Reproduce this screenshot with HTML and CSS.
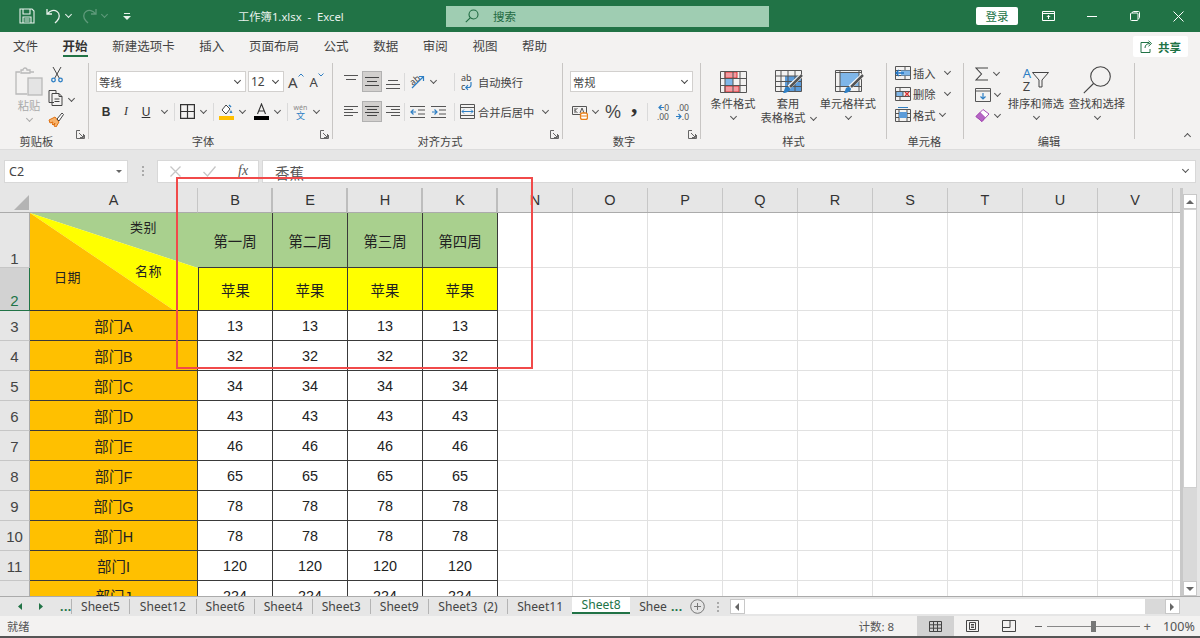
FILE: index.html
```html
<!DOCTYPE html>
<html lang="zh-CN">
<head>
  <meta charset="UTF-8" />
  <title>工作簿1.xlsx - Excel</title>
  <link rel="stylesheet" href="styles.css">
</head>
<body>

  <!-- title bar -->
  <header class="titlebar">
    <svg class="qa-save" width="16" height="16" viewBox="0 0 16 16" fill="none" stroke="#e8f1ec" stroke-width="1.1"><path d="M1 1h12l2 2v12H1zM4 1v5h7V1M4 15V9h8v6M5.5 11h5M5.5 13h5"/></svg>
    <svg class="qa-undo" width="15" height="16" viewBox="0 0 15 16" fill="none" stroke="#e8f1ec" stroke-width="1.3"><path d="M1 1v5h5M1.5 6C4 2.5 8 1.5 11 3.5c3 2 3 6.500 0 9.500l-2 2"/></svg>
    <i class="chev chev-light qa-chev1"></i>
    <svg class="qa-redo" width="15" height="16" viewBox="0 0 15 16" fill="none" stroke="#5f9a7b" stroke-width="1.3"><path d="M14 1v5H9M13.5 6C11 2.5 7 1.5 4 3.5c-3 2-3 6.500 0 9.500l2 2"/></svg>
    <i class="chev chev-dim qa-chev2"></i>
    <svg class="qa-custom" width="8" height="7" viewBox="0 0 8 7" fill="#e8f1ec"><path d="M1 0h6v1H1zM0 3h8L4 7z"/></svg>
    <div class="doc-title">工作簿1.xlsx&nbsp; - &nbsp;Excel</div>
    <div class="searchbox">
      <svg width="14" height="14" viewBox="0 0 14 14" fill="none" stroke="#1f6b42" stroke-width="1.1"><circle cx="8.5" cy="5.5" r="4.5"/><path d="M5.2 8.800L.8 13.200"/></svg>
      <span>搜索</span>
    </div>
    <button class="signin">登录</button>
    <svg class="win-display" width="13" height="10" viewBox="0 0 13 10" fill="none" stroke="#fff"><path d="M.5.5h12v9H.5zM.5 2.5h12M6.5 8V4.500M4.800 6l1.700-1.700L8.200 6"/></svg>
    <svg class="win-min" width="10" height="1" viewBox="0 0 10 1"><path d="M0 0h10v1H0z" fill="#fff"/></svg>
    <svg class="win-max" width="10" height="10" viewBox="0 0 10 10" fill="none" stroke="#fff"><rect x=".5" y="2" width="7.5" height="7.5" rx="1"/><path d="M2.5 2V1.500a1 1 0 0 1 1-1h5a1 1 0 0 1 1 1v5a1 1 0 0 1-1 1"/></svg>
    <svg class="win-close" width="11" height="11" viewBox="0 0 11 11" stroke="#fff"><path d="M.5.5l10 10M10.5.5l-10 10"/></svg>
  </header>

  <!-- tabs -->
  <nav class="tabs">
    <a class="tab">文件</a>
    <a class="tab tab-active">开始</a>
    <a class="tab">新建选项卡</a>
    <a class="tab">插入</a>
    <a class="tab">页面布局</a>
    <a class="tab">公式</a>
    <a class="tab">数据</a>
    <a class="tab">审阅</a>
    <a class="tab">视图</a>
    <a class="tab">帮助</a>
    <button class="share">
      <svg width="14" height="13" viewBox="0 0 14 13" fill="none" stroke="#217346"><path d="M9 2.5H1v10h9V9M5 8c0-3 2-4.500 5-4.500M8.5.8L11.5 3.500 8.5 6.200"/></svg>
      共享
    </button>
  </nav>

  <!-- ribbon -->
  <section class="ribbon">

    <div class="group g-clip">
      <div class="group-body">
        <div class="paste">
          <svg width="28" height="30" viewBox="0 0 28 30" fill="none" stroke="#b9b9b9" stroke-width="1.3"><path d="M5 5H1v22h11M19 5h-4M6 6V3h2a2 2 0 0 1 4 0h3v3z"/><rect x="13" y="11" width="14" height="17" fill="#e4e4e4"/></svg>
          <span class="paste-label">粘贴</span>
          <i class="chev chev-dim2"></i>
        </div>
        <div class="clip-tools">
          <svg class="clip-cut" width="12" height="16" viewBox="0 0 12 16" fill="none" stroke="#444" stroke-width="1"><path d="M2 0l6.5 11.500M10 0L3.5 11.500"/><g stroke="#2e7fc4" stroke-width="1.3"><circle cx="2.5" cy="13" r="1.8"/><circle cx="9.5" cy="13" r="1.8"/></g></svg>
          <div class="clip-copy">
            <svg width="16" height="16" viewBox="0 0 16 16" fill="none" stroke="#444"><path d="M6 12.5H1V.5h7v3M4 3.5h7l3 3v9H4zM11 3.5v3h3M6.5 9h5M6.5 11.500h5"/></svg>
            <i class="chev"></i>
          </div>
          <svg class="clip-brush" width="16" height="15" viewBox="0 0 16 15" fill="none"><path d="M1 8l6-3 4 5-3 5-2-1 1-3-2 2-1-1 1-2-3 1z" fill="#f7b26b" stroke="#e07010"/><path d="M9 7l5-6 1.5 1.500L11 9z" fill="#fff" stroke="#444"/></svg>
        </div>
      </div>
      <div class="group-label">剪贴板</div>
      <svg class="launcher" width="9" height="9" viewBox="0 0 9 9" fill="none" stroke="#666"><path d="M4 .5H.5V8.500h8V5M3 3l4 4M7.5 4v3.500H4"/></svg>
    </div>

    <div class="group g-font">
      <div class="group-body col">
        <div class="tool-row">
          <div class="combo combo-font">等线<i class="chev combo-chev"></i></div>
          <div class="combo combo-size">12<i class="chev combo-chev"></i></div>
          <span class="grow-a">A<svg width="6" height="4" viewBox="0 0 6 4" fill="none" stroke="#2e7fc4"><path d="M.5 3.500L3 1l2.500 2.500"/></svg></span>
          <span class="shrink-a">A<svg width="6" height="4" viewBox="0 0 6 4" fill="none" stroke="#2e7fc4"><path d="M.5.5L3 3 5.5.5"/></svg></span>
        </div>
        <div class="tool-row row2">
          <span class="tool t-b">B</span>
          <span class="tool t-i">I</span>
          <span class="tool t-u">U</span>
          <i class="chev chev-slot"></i>
          <i class="sep"></i>
          <svg width="15" height="15" viewBox="0 0 15 15" fill="none" stroke="#333" stroke-width="1.2"><path d="M.6.6h13.800v13.800H.6zM7.5.6v13.800M.6 7.500h13.800"/></svg>
          <i class="chev chev-slot"></i>
          <i class="sep"></i>
          <svg width="15" height="17" viewBox="0 0 15 17" fill="none"><path d="M3 7l4-5 4 4-4 5z" stroke="#444" fill="#fff"/><path d="M10 2l2 2" stroke="#2e7fc4" stroke-width="1.5"/><path d="M12 7l1.5 3h-3z" fill="#2e7fc4"/><path d="M0 13h15v4H0z" fill="#ffc000"/></svg>
          <i class="chev chev-slot"></i>
          <span class="fc-gap"></span>
          <svg width="15" height="17" viewBox="0 0 15 17" fill="none"><path d="M3.5 11l4-10 4 10M5 8h5" stroke="#333" stroke-width="1.1"/><path d="M0 13h15v4H0z" fill="#000"/></svg>
          <i class="chev chev-slot"></i>
          <i class="sep"></i>
          <span class="wen"><b>wén</b><em>文</em></span>
          <i class="chev chev-slot"></i>
        </div>
      </div>
      <div class="group-label">字体</div>
      <svg class="launcher" width="9" height="9" viewBox="0 0 9 9" fill="none" stroke="#666"><path d="M4 .5H.5V8.500h8V5M3 3l4 4M7.5 4v3.500H4"/></svg>
    </div>

    <div class="group g-align">
      <div class="group-body col">
        <div class="tool-row">
          <span class="al al-high"><svg width="14" height="6" viewBox="0 0 14 6" stroke="#555"><path d="M0 .5h14M2 4.500h10"/></svg></span>
          <span class="al al-on"><svg width="14" height="10" viewBox="0 0 14 10" stroke="#444"><path d="M0 .5h14M2 4.500h10M0 8.500h14"/></svg></span>
          <span class="al al-low"><svg width="14" height="9" viewBox="0 0 14 9" stroke="#555"><path d="M2 .5h10M0 4.500h14M0 8.500h14"/></svg></span>
          <i class="sep sep-a"></i>
          <svg class="orient" width="15" height="15" viewBox="0 0 15 15" fill="none"><text x="1" y="9" transform="rotate(-40 6 8)" class="orient-text">ab</text><path d="M2 14L13 3M9 2.500h4.500V7" stroke="#2e7fc4" stroke-width="1.2"/></svg>
          <i class="chev chev-slot"></i>
          <i class="sep sep-b"></i>
          <span class="wrap-ic"><span>ab</span><span>c</span><svg width="7" height="10" viewBox="0 0 7 10" fill="none" stroke="#2e7fc4" stroke-width="1.2"><path d="M6 0v3a2.500 2.500 0 0 1-2.500 2.500H1M3 3.200L.8 5.500 3 7.800"/></svg></span>
          <span class="al-text">自动换行</span>
        </div>
        <div class="tool-row row2">
          <span class="al"><svg width="14" height="11" viewBox="0 0 14 11" stroke="#555"><path d="M0 .5h14M0 3.500h9M0 6.500h14M0 9.500h9"/></svg></span>
          <span class="al al-on"><svg width="14" height="11" viewBox="0 0 14 11" stroke="#444"><path d="M0 .5h14M2 3.500h10M0 6.500h14M2 9.500h10"/></svg></span>
          <span class="al"><svg width="14" height="11" viewBox="0 0 14 11" stroke="#555"><path d="M0 .5h14M5 3.500h9M0 6.500h14M5 9.500h9"/></svg></span>
          <i class="sep sep-a"></i>
          <svg class="indent1" width="15" height="12" viewBox="0 0 15 12" fill="none"><path d="M0 .5h15M8 4h7M8 8h7M0 11.500h15" stroke="#555"/><path d="M6 6H1M3.5 3.500L1 6l2.500 2.500" stroke="#2e7fc4" stroke-width="1.2"/></svg>
          <svg class="indent2" width="15" height="12" viewBox="0 0 15 12" fill="none"><path d="M0 .5h15M8 4h7M8 8h7M0 11.500h15" stroke="#555"/><path d="M1 6h5M3.5 3.500L6 6 3.5 8.500" stroke="#2e7fc4" stroke-width="1.2"/></svg>
          <i class="sep sep-c"></i>
          <svg class="merge-ic" width="15" height="15" viewBox="0 0 15 15" fill="none"><path d="M.5.5h14v14H.5zM.5 3.500h14M.5 11.500h14" stroke="#555"/><path d="M2 7.500h11M4 5.500L2 7.500l2 2M11 5.500l2 2-2 2" stroke="#2e7fc4"/></svg>
          <span class="al-text">合并后居中</span>
          <i class="chev merge-chev"></i>
        </div>
      </div>
      <div class="group-label">对齐方式</div>
      <svg class="launcher" width="9" height="9" viewBox="0 0 9 9" fill="none" stroke="#666"><path d="M4 .5H.5V8.500h8V5M3 3l4 4M7.5 4v3.500H4"/></svg>
    </div>

    <div class="group g-num">
      <div class="group-body col">
        <div class="tool-row">
          <div class="combo combo-num">常规<i class="chev combo-chev"></i></div>
        </div>
        <div class="tool-row row2">
          <svg class="acct-ic" width="16" height="16" viewBox="0 0 16 16" fill="none"><path d="M.5 2.500h14v8H.5z" stroke="#555"/><path d="M3 4v5M3 6.500L5.5 4M3 6.500L5.5 9M8 9l2-5 2 5" stroke="#555"/><rect x="8.5" y="9" width="7" height="6.5" rx="2" fill="#fff" stroke="#e8811a" stroke-width="1.3"/><path d="M9 12h6" stroke="#e8811a"/></svg>
          <i class="chev chev-slot"></i>
          <span class="pct">%</span>
          <span class="comma">,</span>
          <i class="sep sep-d"></i>
          <span class="dec dec-in"><svg width="6" height="7" viewBox="0 0 6 7" fill="none" stroke="#2e7fc4" stroke-width="1.2"><path d="M6 3.500H1M3.5 1L1 3.500 3.5 6"/></svg>0<br>.00</span>
          <span class="dec dec-out">.00<br><svg width="6" height="7" viewBox="0 0 6 7" fill="none" stroke="#2e7fc4" stroke-width="1.2"><path d="M0 3.500h5M2.500 1L5 3.500 2.500 6"/></svg>.0</span>
        </div>
      </div>
      <div class="group-label">数字</div>
      <svg class="launcher" width="9" height="9" viewBox="0 0 9 9" fill="none" stroke="#666"><path d="M4 .5H.5V8.500h8V5M3 3l4 4M7.5 4v3.500H4"/></svg>
    </div>

    <div class="group g-style">
      <div class="group-body row">
        <div class="big big-cond">
          <svg width="27" height="22" viewBox="0 0 27 22" fill="none"><path d="M5 1h12v6H5zM5 15h14v6H5z" fill="#f59aa0" stroke="#d33"/><path d="M5 8h8v6H5z" fill="#7fb6e8"/><path d="M.5.5h26v21H.5zM.5 7.500h26M.5 14.500h26M5 .5v21M13 .5v21M20 .5v21" stroke="#555"/></svg>
          <span>条件格式</span>
          <i class="chev"></i>
        </div>
        <div class="big big-table">
          <svg width="29" height="24" viewBox="0 0 29 24" fill="none"><path d="M10 6h17v15H10z" fill="#5b9bd9"/><path d="M.5.5h26v21H.5zM.5 6h26M.5 11.500h26M.5 16.500h26M6 .5v21M13 .5v21M20 .5v21" stroke="#555"/><path d="M27 5L14 17" stroke="#fff" stroke-width="4"/><path d="M27 5L15 17" stroke="#555" stroke-width="2.5"/><path d="M10 18c2-2 5-1 5 1s-3 4-7 4c1-1 1-3 2-5z" fill="#2e7fc4"/></svg>
          <span>套用</span>
          <span>表格格式<i class="chev inline-chev"></i></span>
        </div>
        <div class="big big-cell">
          <svg width="29" height="24" viewBox="0 0 29 24" fill="none"><path d="M5 2h19v14H5z" fill="#7fb6e8"/><path d="M.5.5h26v21H.5zM.5 2.500h26M.5 16.500h26M5 .5v21M24 .5v21" stroke="#555"/><path d="M28 5L15 17" stroke="#fff" stroke-width="4"/><path d="M28 5L16 17" stroke="#555" stroke-width="2.5"/><path d="M11 18c2-2 5-1 5 1s-3 4-7 4c1-1 1-3 2-5z" fill="#2e7fc4"/></svg>
          <span>单元格样式</span>
          <i class="chev"></i>
        </div>
      </div>
      <div class="group-label">样式</div>
    </div>

    <div class="group g-cells">
      <div class="group-body col">
        <div class="cell-row">
          <svg width="16" height="14" viewBox="0 0 16 14" fill="none"><path d="M.5.5h15v13H.5zM.5 4.500h15M.5 9.500h15M10 .5v13" stroke="#555"/><path d="M6 4.500h9v5H6z" fill="#7fb6e8"/><path d="M9 7H1M4 4L1 7l3 3" stroke="#1f74c4" stroke-width="1.3"/></svg>
          <span>插入</span><i class="chev cells-chev"></i>
        </div>
        <div class="cell-row">
          <svg width="16" height="14" viewBox="0 0 16 14" fill="none"><path d="M.5.5h15v13H.5zM.5 4.500h15M.5 9.500h15M5 .5v13" stroke="#555"/><path d="M1 4.500h7v5H1z" fill="#7fb6e8" stroke="#555"/><path d="M10 5l4 4M14 5l-4 4" stroke="#d33" stroke-width="1.3"/></svg>
          <span>删除</span><i class="chev cells-chev"></i>
        </div>
        <div class="cell-row">
          <svg width="16" height="15" viewBox="0 0 16 15" fill="none"><path d="M.5 2.500h15v12H.5zM.5 6.500h15M.5 10.500h15M4 2.500v12M12 2.500v12" stroke="#555"/><path d="M4 5h8v6H4z" fill="#5b9bd9"/><path d="M3 .5h10" stroke="#2e7fc4"/></svg>
          <span>格式</span><i class="chev cells-chev-s"></i>
        </div>
      </div>
      <div class="group-label">单元格</div>
    </div>

    <div class="group g-edit">
      <div class="group-body row">
        <div class="edit-tools">
          <div class="edit-row"><svg width="13" height="14" viewBox="0 0 13 14" fill="none" stroke="#444" stroke-width="1.1"><path d="M13 1H1l5.5 6L1 13h12"/></svg><i class="chev edit-chev"></i></div>
          <div class="edit-row"><svg width="16" height="14" viewBox="0 0 16 14" fill="none"><path d="M.5.5h15v13H.5zM.5 3h15" stroke="#555"/><path d="M8 5v6M5.5 8.500L8 11l2.500-2.500" stroke="#2e7fc4" stroke-width="1.2"/></svg><i class="chev edit-chev2"></i></div>
          <div class="edit-row"><svg width="15" height="15" viewBox="0 0 15 15" fill="none"><path d="M1 8.500L8 1.500l6 4.500-7 7.500z" fill="#fff" stroke="#a64bb5"/><path d="M1 8.500l4-4 5 5-3 4z" fill="#b565c4" stroke="#a64bb5"/></svg><i class="chev edit-chev3"></i></div>
        </div>
        <div class="big big-sort">
          <span class="sort-ic">
            <span class="az"><span class="az-a">A</span><span>Z</span></span>
            <svg width="17" height="16" viewBox="0 0 17 16" fill="none" stroke="#444"><path d="M.5.5h16L10 8v7H7V8z"/></svg>
          </span>
          <span>排序和筛选</span>
          <i class="chev"></i>
        </div>
        <div class="big big-find">
          <svg width="28" height="28" viewBox="0 0 28 28" fill="none" stroke="#444"><circle cx="17.5" cy="10.5" r="9.8" stroke-width="1.1"/><path d="M10.500 17.500L.8 27.200" stroke-width="1.1"/></svg>
          <span>查找和选择</span>
          <i class="chev"></i>
        </div>
      </div>
      <div class="group-label">编辑</div>
    </div>

    <i class="chev chev-up collapse"></i>
  </section>

  <!-- formula bar -->
  <section class="formula">
    <div class="namebox">C2<svg width="6" height="3" viewBox="0 0 6 3"><path d="M0 0h6L3 3z" fill="#666"/></svg></div>
    <div class="dots"><i></i><i></i><i></i></div>
    <div class="fx-btns">
      <svg width="11" height="11" viewBox="0 0 11 11" stroke="#c6c6c6" stroke-width="1.3"><path d="M.5.5l10 10M10.5.5l-10 10"/></svg>
      <svg width="13" height="11" viewBox="0 0 13 11" fill="none" stroke="#c6c6c6" stroke-width="1.3"><path d="M.5 6l4 4 8-9.500"/></svg>
      <em>fx</em>
    </div>
    <div class="fx-input"><span>香蕉</span><i class="chev fx-chev"></i></div>
  </section>

  <!-- sheet -->
  <section class="sheet-wrap">
    <div class="sheet">
      <div class="corner"><svg width="15" height="15" viewBox="0 0 15 15"><path d="M15 0v15H0z" fill="#b4b4b4"/></svg></div>
      <div class="colhead">A</div>
      <div class="colhead thick">B</div>
      <div class="colhead thick">E</div>
      <div class="colhead thick">H</div>
      <div class="colhead thick">K</div>
      <div class="colhead-rest">
        <span>N</span><span>O</span><span>P</span><span>Q</span><span>R</span><span>S</span><span>T</span><span>U</span><span>V</span>
      </div>

      <div class="rowhead rowhead-tall">1</div>
      <div class="diag">
        <svg width="168" height="98" viewBox="0 0 168 98"><path d="M0 0H168V55z" fill="#a9d08e"/><path d="M0 0L168 55V98H145z" fill="#ffff00"/><path d="M0 0L145 98H0z" fill="#ffc000"/><path d="M0 97.5H168" stroke="#333"/></svg>
        <span class="d-cat">类别</span>
        <span class="d-name">名称</span>
        <span class="d-date">日期</span>
      </div>
      <div class="cell green">第一周</div>
      <div class="cell green">第二周</div>
      <div class="cell green">第三周</div>
      <div class="cell green">第四周</div>
      <div class="rest"></div>

      <div class="rowhead rowhead-on">2</div>
      <div class="cell yellow first">苹果</div>
      <div class="cell yellow">苹果</div>
      <div class="cell yellow">苹果</div>
      <div class="cell yellow">苹果</div>
      <div class="rest"></div>

      <div class="rowhead">3</div><div class="cell dept">部门A</div><div class="cell">13</div><div class="cell">13</div><div class="cell">13</div><div class="cell">13</div><div class="rest"></div>
      <div class="rowhead">4</div><div class="cell dept">部门B</div><div class="cell">32</div><div class="cell">32</div><div class="cell">32</div><div class="cell">32</div><div class="rest"></div>
      <div class="rowhead">5</div><div class="cell dept">部门C</div><div class="cell">34</div><div class="cell">34</div><div class="cell">34</div><div class="cell">34</div><div class="rest"></div>
      <div class="rowhead">6</div><div class="cell dept">部门D</div><div class="cell">43</div><div class="cell">43</div><div class="cell">43</div><div class="cell">43</div><div class="rest"></div>
      <div class="rowhead">7</div><div class="cell dept">部门E</div><div class="cell">46</div><div class="cell">46</div><div class="cell">46</div><div class="cell">46</div><div class="rest"></div>
      <div class="rowhead">8</div><div class="cell dept">部门F</div><div class="cell">65</div><div class="cell">65</div><div class="cell">65</div><div class="cell">65</div><div class="rest"></div>
      <div class="rowhead">9</div><div class="cell dept">部门G</div><div class="cell">78</div><div class="cell">78</div><div class="cell">78</div><div class="cell">78</div><div class="rest"></div>
      <div class="rowhead">10</div><div class="cell dept">部门H</div><div class="cell">78</div><div class="cell">78</div><div class="cell">78</div><div class="cell">78</div><div class="rest"></div>
      <div class="rowhead">11</div><div class="cell dept">部门I</div><div class="cell">120</div><div class="cell">120</div><div class="cell">120</div><div class="cell">120</div><div class="rest"></div>
      <div class="rowhead"></div><div class="cell dept">部门J</div><div class="cell">224</div><div class="cell">224</div><div class="cell">224</div><div class="cell">224</div><div class="rest"></div>
    </div>

    <div class="vscroll">
      <div class="sb-btn"><svg width="8" height="4" viewBox="0 0 8 4"><path d="M0 4h8L4 0z" fill="#666"/></svg></div>
      <div class="sb-thumb"></div>
      <div class="sb-track"></div>
      <div class="sb-btn"><svg width="8" height="4" viewBox="0 0 8 4"><path d="M0 0h8L4 4z" fill="#666"/></svg></div>
    </div>
  </section>

  <!-- sheet tabs -->
  <section class="sheetbar">
    <div class="sheet-nav">
      <svg width="4" height="7" viewBox="0 0 4 7"><path d="M4 0v7L0 3.500z" fill="#217346"/></svg>
      <svg width="4" height="7" viewBox="0 0 4 7"><path d="M0 0v7l4-3.500z" fill="#217346"/></svg>
      <b>...</b>
    </div>
    <a class="stab">Sheet5</a>
    <a class="stab stab-12">Sheet12</a>
    <a class="stab">Sheet6</a>
    <a class="stab">Sheet4</a>
    <a class="stab">Sheet3</a>
    <a class="stab">Sheet9</a>
    <a class="stab stab-copy">Sheet3 (2)</a>
    <a class="stab">Sheet11</a>
    <a class="stab stab-on">Sheet8</a>
    <a class="stab stab-last">Shee<b>...</b></a>
    <svg class="add-sheet" width="15" height="15" viewBox="0 0 15 15" fill="none" stroke="#777"><circle cx="7.5" cy="7.5" r="6.8"/><path d="M7.5 4v7M4 7.500h7"/></svg>
    <div class="dots dots-tab"><i></i><i></i><i></i></div>
    <div class="hscroll">
      <div class="sb-btn h"><svg width="4" height="8" viewBox="0 0 4 8"><path d="M4 0v8L0 4z" fill="#666"/></svg></div>
      <div class="hs-thumb"></div>
      <div class="hs-track"></div>
      <div class="sb-btn h"><svg width="4" height="8" viewBox="0 0 4 8"><path d="M0 0v8l4-4z" fill="#666"/></svg></div>
    </div>
  </section>

  <!-- status bar -->
  <footer class="status">
    <span class="ready">就绪</span>
    <span class="count">计数: 8</span>
    <div class="view view-on"><svg width="13" height="11" viewBox="0 0 13 11" fill="none" stroke="#444"><path d="M.5.5h12v10H.5zM.5 3.800h12M.5 7.200h12M4.500.5v10M8.500.5v10"/></svg></div>
    <div class="view"><svg width="13" height="12" viewBox="0 0 13 12" fill="none" stroke="#444"><path d="M.5.5h12v11H.5zM3.500 2.500h6v7h-6zM5 4.500h3M5 6h3M5 7.500h3"/></svg></div>
    <div class="view"><svg width="14" height="12" viewBox="0 0 14 12" fill="none" stroke="#444"><path d="M.5.5h13v11H.5zM.5 7.500h7.500V.5"/></svg></div>
    <span class="z-minus"></span>
    <div class="slider"><i></i></div>
    <span class="z-plus">+</span>
    <span class="zoom">100%</span>
  </footer>

  <!-- annotation drawn over the sheet -->
  <div class="red-box"></div>

</body>
</html>
```

FILE: styles.css
```css
* {
  margin: 0;
  padding: 0;
  box-sizing: border-box;
}

html, body {
  height: 100%;
  overflow: hidden;
}

body {
  position: relative;
  display: flex;
  flex-direction: column;
  background: #f3f2f1;
  color: #444;
  font-family: "Noto Sans", "Noto Sans CJK SC", sans-serif;
  font-size: 11.25px;
  border-bottom: 2px solid #555;
}

svg {
  flex: none;
  display: block;
}

i, em {
  font-style: normal;
}

/* small chevrons used all over the ribbon */
.chev {
  display: inline-block;
  flex: none;
  width: 5px;
  height: 5px;
  border-right: 1px solid #555;
  border-bottom: 1px solid #555;
  transform: rotate(45deg);
}

.chev-light { border-color: #e8f1ec; }
.chev-dim { border-color: #5f9a7b; }
.chev-dim2 { border-color: #aaa; }

.chev-up {
  transform: rotate(225deg);
}

.chev-slot {
  margin-left: 6px;
  margin-right: 2px;
  margin-top: -3px;
}

/* title bar */
.titlebar {
  flex: none;
  height: 32px;
  display: flex;
  align-items: center;
  background: #217346;
  color: #e8f1ec;
}

.qa-save { margin-left: 19px; }
.qa-undo { margin-left: 11px; }
.qa-chev1 { margin-left: 5px; margin-top: -3px; }
.qa-redo { margin-left: 11px; }
.qa-chev2 { margin-left: 5px; margin-top: -3px; }
.qa-custom { margin-left: 16px; }

.doc-title {
  margin-left: 107px;
  width: 208px;
  font-size: 11.3px;
  white-space: nowrap;
}

.searchbox {
  width: 323px;
  height: 21px;
  display: flex;
  align-items: center;
  gap: 14px;
  padding-left: 19px;
  background: #9fcdb2;
  color: #1f6b42;
  font-size: 11.5px;
}

.signin {
  margin-left: 207px;
  width: 42px;
  height: 18px;
  border: 0;
  border-radius: 2px;
  background: #fff;
  color: #217346;
  font: inherit;
  font-size: 11.5px;
}

.win-display { margin-left: 24px; }
.win-min { margin-left: 32px; }
.win-max { margin-left: 33px; }
.win-close { margin-left: 33px; }

/* tab row */
.tabs {
  flex: none;
  height: 26px;
  display: flex;
  align-items: center;
  padding-left: 1px;
  position: relative;
}

.tab {
  padding: 0 12px;
  margin-right: 0.6px;
  height: 26px;
  line-height: 29px;
  font-size: 12.5px;
  position: relative;
  color: #444;
}

.tab-active {
  font-weight: 700;
  color: #333;
}

.tab-active::after {
  content: "";
  position: absolute;
  left: 12px;
  right: 12px;
  bottom: 1px;
  height: 2px;
  background: #217346;
}

.share {
  margin-left: auto;
  margin-right: 12px;
  margin-top: 3px;
  width: 55px;
  height: 21px;
  display: flex;
  align-items: center;
  justify-content: center;
  gap: 4px;
  border: 0;
  border-radius: 2px;
  background: #fff;
  color: #217346;
  font: inherit;
  font-size: 11.5px;
  font-weight: 700;
}

/* ribbon */
.ribbon {
  flex: none;
  height: 100px;
  display: flex;
  padding: 5px 0 11px;
  position: relative;
  background: #f3f2f1;
  border-bottom: 8px solid #e6e6e6;
  box-shadow: inset 0 -1px 0 #dcdcdc;
}

.group {
  position: relative;
  display: flex;
  flex-direction: column;
  border-right: 1px solid #c8c6c4;
}

.group-body {
  height: 73px;
  flex: none;
}

.group-body.col {
  display: flex;
  flex-direction: column;
  padding-top: 8px;
}

.group-body.row {
  display: flex;
}

.group-label {
  height: 11px;
  line-height: 11px;
  text-align: center;
  white-space: nowrap;
}

.launcher {
  position: absolute;
  right: 3px;
  bottom: 0;
}

.g-clip { width: 89px; }
.g-font { width: 244px; }
.g-align { width: 230px; }
.g-num { width: 138px; }
.g-style { width: 186px; }
.g-cells { width: 77px; }
.g-edit { width: 171px; }

.g-clip .group-body {
  display: flex;
}

.g-clip .group-label,
.g-font .group-label,
.g-align .group-label,
.g-num .group-label {
  padding-right: 15px;
}

.paste {
  margin-left: 15px;
  margin-top: 4px;
  width: 28px;
  display: flex;
  flex-direction: column;
  align-items: center;
}

.paste-label {
  margin-top: 2px;
  line-height: 14px;
  color: #aaa;
}

.paste .chev {
  margin-top: 3px;
}

.clip-tools {
  margin-left: 5px;
  display: flex;
  flex-direction: column;
}

.clip-cut { margin: 4px 0 0 3px; }
.clip-copy {
  margin-top: 7px;
  display: flex;
  align-items: center;
  gap: 5px;
}
.clip-brush { margin-top: 6px; }

.tool-row {
  height: 21px;
  display: flex;
  align-items: center;
  padding-left: 7px;
}

.row2 {
  margin-top: 9px;
}

.combo {
  height: 21px;
  display: flex;
  align-items: center;
  justify-content: space-between;
  padding: 0 5px 0 2px;
  background: #fff;
  border: 1px solid #d2d0ce;
  font-size: 11.25px;
}

.combo-font { width: 150px; }
.combo-size { width: 36px; margin-left: 2px; font-size: 12px; }
.combo-num { width: 123px; }

.combo-chev {
  margin-top: -3px;
  border-width: 0 1.5px 1.5px 0;
  border-color: #444;
}

.grow-a, .shrink-a {
  display: flex;
  color: #444;
}

.grow-a {
  margin-left: 4px;
  font-size: 15px;
  line-height: 18px;
}

.shrink-a {
  margin-left: 6px;
  font-size: 13px;
  line-height: 18px;
}

.tool {
  width: 20px;
  text-align: center;
  font-family: "Liberation Sans", sans-serif;
  font-size: 12px;
  color: #333;
}

.t-b { font-weight: 700; }
.t-i { font-style: italic; font-family: "Liberation Serif", serif; }
.t-u { text-decoration: underline; }

.sep {
  flex: none;
  width: 1px;
  height: 18px;
  margin: 0 5px;
  background: #dadada;
}

.fc-gap {
  width: 7px;
}

.wen {
  width: 15px;
  display: flex;
  flex-direction: column;
  align-items: center;
  line-height: 8px;
}

.wen b {
  font-size: 7px;
  font-weight: 400;
  color: #888;
}

.wen em {
  font-size: 9px;
  color: #2e7fc4;
}

.g-align .tool-row {
  padding-left: 8px;
}

.al {
  width: 20px;
  height: 21px;
  margin-right: 1px;
  display: flex;
  align-items: center;
  justify-content: center;
}

.al-high {
  align-items: flex-start;
  padding-top: 4px;
}

.al-low {
  align-items: flex-end;
  padding-bottom: 3px;
}

.al-on {
  background: #d2d0ce;
  border: 1px solid #b1b1b1;
}

.sep-a { margin: 0 5px 0 0; }
.sep-b { margin: 0 6px 0 16px; }
.sep-c { margin: 0 5px 0 8px; }
.sep-d { margin: 0 6px 0 8px; }

.orient {
  overflow: visible;
}

.orient-text {
  font-size: 9px;
  fill: #444;
  font-family: "Noto Sans", sans-serif;
}

.wrap-ic {
  width: 14px;
  height: 18px;
  display: flex;
  flex-wrap: wrap;
  font-size: 9px;
  line-height: 9px;
  color: #444;
}

.wrap-ic span:first-child {
  width: 14px;
}

.al-text {
  margin-left: 3px;
}

.indent1 { margin-left: 0; }
.indent2 { margin-left: 6px; }

.merge-chev {
  margin-left: 9px;
  margin-top: -3px;
}

.g-num .tool-row {
  padding-left: 7px;
}

.acct-ic {
  margin-left: 2px;
}

.g-num .chev-slot {
  margin-left: 5px;
}

.pct {
  margin-left: 5px;
  width: 16px;
  font-family: "Liberation Sans", sans-serif;
  font-size: 18px;
  line-height: 20px;
}

.comma {
  margin-left: 10px;
  margin-top: -14px;
  width: 8px;
  font-family: "Liberation Serif", serif;
  font-size: 26px;
  font-weight: 700;
  line-height: 14px;
  color: #333;
}

.dec {
  width: 15px;
  font-size: 8.5px;
  line-height: 9px;
  text-align: right;
  color: #555;
}

.dec svg {
  display: inline-block;
}

.dec-out {
  margin-left: 5px;
}

/* big buttons with a label under the icon */
.big {
  display: flex;
  flex-direction: column;
  align-items: center;
  line-height: 14px;
  white-space: nowrap;
}

.big > svg {
  height: 28px;
  margin-top: 5px;
  margin-bottom: 1px;
}

.big .chev {
  margin-top: 3px;
}

.big .inline-chev {
  margin: 0 0 3px 5px;
  vertical-align: middle;
}

.g-style .group-body {
  padding-left: 8px;
  gap: 2px;
}

.big-cond { width: 48px; }
.big-table { width: 58px; }
.big-cell { width: 58px; }

.big-sort, .big-find {
  width: 58px;
}

.big-table > svg, .big-cell > svg {
  margin-left: 2px;
}

.cell-row {
  height: 21px;
  margin-top: -1px;
  margin-bottom: 1px;
  display: flex;
  align-items: center;
  padding-left: 8px;
}

.cell-row span {
  margin-left: 2px;
}

.cells-chev {
  margin-left: 9px;
  margin-top: -3px;
}

.cells-chev-s {
  margin-left: 4px;
  margin-top: -3px;
  width: 5px;
  height: 5px;
  border-right: 1px solid #555;
  border-bottom: 1px solid #555;
  transform: rotate(45deg);
}

.g-cells .group-body.col {
  padding-top: 0;
}

.g-cells .group-label {
  padding-right: 1px;
}

.edit-tools {
  width: 31px;
  margin-left: 9px;
}

.edit-row {
  height: 21px;
  display: flex;
  align-items: center;
  padding-left: 2px;
}

.edit-chev { margin-left: 6px; margin-top: -3px; }
.edit-chev2 { margin-left: 4px; margin-top: -3px; }
.edit-chev3 { margin-left: 5px; margin-top: -3px; }

.g-edit .group-body {
  gap: 3px;
}

.big-sort .sort-ic {
  height: 28px;
  margin-top: 3px;
  margin-bottom: 3px;
  display: flex;
  align-items: center;
  gap: 1px;
}

.az {
  display: flex;
  flex-direction: column;
  font-size: 13px;
  line-height: 13px;
  color: #444;
}

.az-a {
  color: #2e7fc4;
}

.big-find > svg {
  margin-top: 3px;
  margin-bottom: 3px;
}

.collapse {
  position: absolute;
  right: 10px;
  bottom: 11px;
}

/* formula bar */
.formula {
  flex: none;
  height: 30px;
  display: flex;
  align-items: center;
  padding: 0 4px 4px;
  background: #e6e6e6;
}

.namebox {
  width: 124px;
  height: 23px;
  display: flex;
  align-items: center;
  justify-content: space-between;
  padding: 0 5px 0 4px;
  background: #fff;
  border: 1px solid #d8d8d8;
  font-size: 12.5px;
  color: #444;
}

.dots {
  width: 29px;
  display: flex;
  flex-direction: column;
  align-items: center;
  gap: 2px;
}

.dots i {
  width: 2px;
  height: 2px;
  background: #aaa;
}

.fx-btns {
  width: 102px;
  height: 23px;
  display: flex;
  align-items: center;
  gap: 22px;
  padding-left: 12px;
  background: #fff;
  border: 1px solid #d8d8d8;
}

.fx-btns em {
  font-family: "Liberation Serif", serif;
  font-style: italic;
  font-size: 14px;
  color: #555;
}

.fx-input {
  margin-left: 3px;
  flex: 1;
  height: 23px;
  display: flex;
  align-items: center;
  justify-content: space-between;
  padding: 0 7px 0 12px;
  background: #fff;
  border: 1px solid #d8d8d8;
  font-size: 14.5px;
  color: #555;
}

.fx-input span {
  padding-top: 2px;
}

.fx-chev {
  border-width: 0 1.5px 1.5px 0;
  margin-top: -3px;
}

/* the grid */
.sheet-wrap {
  flex: 1;
  min-height: 0;
  display: flex;
  overflow: hidden;
  background: #e6e6e6;
}

.sheet {
  width: 1183px;
  flex: none;
  display: grid;
  grid-template-columns: 30px 168px 75px 75px 75px 75px 1fr;
  grid-template-rows: 25px 55px 43px;
  grid-auto-rows: 30px;
  font-family: "Liberation Sans", "Noto Sans CJK SC", sans-serif;
  font-size: 14.4px;
  color: #222;
  background: #fff;
  border-right: 3px solid #c8c8c8;
}

.corner, .colhead, .colhead-rest {
  background: #e6e6e6;
  border-bottom: 1px solid #ababab;
}

.corner {
  display: flex;
  align-items: flex-end;
  justify-content: flex-end;
  padding: 0 1px 2px 0;
}

.colhead {
  display: flex;
  align-items: center;
  justify-content: center;
  border-right: 1px solid #c6c6c6;
  font-size: 14.5px;
  color: #333;
}

.thick {
  padding-left: 1px;
  border-right: 2px solid #bdbdbd;
}

.colhead-rest {
  display: flex;
  font-size: 14.5px;
  color: #333;
}

.colhead-rest span {
  width: 75px;
  flex: none;
  display: flex;
  align-items: center;
  justify-content: center;
  border-right: 1px solid #c6c6c6;
}

.rowhead {
  background: #e6e6e6;
  border-bottom: 1px solid #c6c6c6;
  border-right: 1px solid #ababab;
  display: flex;
  align-items: center;
  justify-content: center;
  padding-top: 2px;
  font-family: "Liberation Sans", sans-serif;
  font-size: 15px;
  color: #444;
}

.rowhead-tall, .rowhead-on {
  align-items: flex-end;
  line-height: 16px;
  padding-top: 0;
}

.rowhead-on {
  padding-bottom: 1px;
  background: #d2d2d2;
  color: #217346;
  border-right-color: #217346;
  border-bottom-color: #217346;
}

.diag {
  grid-row: span 2;
  position: relative;
}

.diag span {
  position: absolute;
  font-size: 13px;
  letter-spacing: 0.5px;
  line-height: 16px;
  font-family: "Noto Sans CJK SC", sans-serif;
}

.d-cat { left: 100px; top: 6px; }
.d-name { left: 105px; top: 50px; }
.d-date { left: 24px; top: 56px; }

.cell {
  display: flex;
  align-items: center;
  justify-content: center;
  border-right: 1px solid #3a3a3a;
  border-bottom: 1px solid #3a3a3a;
  padding-top: 1px;
}

.green { background: #a9d08e; padding-top: 0; }
.yellow { background: #ffff00; padding-top: 0; }
.first { border-left: 1px solid #3a3a3a; }
.dept { background: #ffc000; padding-top: 0; padding-bottom: 1px; }

.rest {
  border-bottom: 1px solid #e1e1e1;
  background: repeating-linear-gradient(90deg, transparent 0 74px, #e1e1e1 74px 75px);
}

.vscroll {
  width: 17px;
  padding: 6px 3px 0 0;
  display: flex;
  flex-direction: column;
  background: #e6e6e6;
}

.sb-btn {
  flex: none;
  height: 15px;
  display: flex;
  align-items: center;
  justify-content: center;
  background: #fff;
  border: 1px solid #c8c8c8;
}

.sb-thumb {
  flex: none;
  height: 279px;
  background: #fff;
  border: 1px solid #d0d0d0;
}

.sb-track {
  flex: 1;
  background: #d9d9d9;
}

.red-box {
  position: absolute;
  left: 176px;
  top: 177px;
  width: 357px;
  height: 192px;
  border: 2px solid #f14a4a;
}

/* sheet tabs */
.sheetbar {
  flex: none;
  height: 20px;
  display: flex;
  align-items: stretch;
  background: #e6e6e6;
  border-top: 1px solid #ababab;
  font-size: 12.1px;
  color: #444;
}

.sheet-nav {
  width: 71px;
  display: flex;
  align-items: center;
  padding-left: 18px;
  gap: 17px;
}

.sheet-nav b, .stab-last b {
  color: #217346;
  font-weight: 700;
  letter-spacing: 0.5px;
}

.stab {
  display: flex;
  align-items: center;
  justify-content: center;
  padding: 0 9px;
  margin: 2px 0;
  border-left: 1px solid #b4b4b4;
  white-space: nowrap;
}

.stab-12 {
  padding: 0 9.8px;
}

.stab-copy {
  padding: 0 9.5px;
  word-spacing: 3px;
}

.stab-on {
  margin: 0 0 2px;
  padding: 0;
  width: 58px;
  background: #fff;
  color: #217346;
  border-left: 0;
  border-bottom: 2px solid #217346;
}

.stab-last {
  border-left: 0;
  gap: 4px;
  padding: 0 0 0 9px;
}

.add-sheet {
  margin: 2px 0 0 7px;
}

.dots-tab {
  margin-left: 2px;
  width: 22px;
  justify-content: center;
}

.hscroll {
  margin: 2px 0 0 1px;
  width: 450px;
  height: 15px;
  display: flex;
}

.sb-btn.h {
  width: 15px;
}

.hs-thumb {
  width: 400px;
  background: #fff;
}

.hs-track {
  flex: 1;
  background: #d9d9d9;
}

/* status bar */
.status {
  flex: none;
  height: 20px;
  display: flex;
  align-items: center;
  background: #f3f2f1;
  color: #555;
  font-size: 11.25px;
}

.ready { margin-left: 7px; }
.count { margin-left: 829px; width: 58px; font-size: 11.5px; }

.view {
  width: 37px;
  height: 20px;
  display: flex;
  align-items: center;
  justify-content: center;
}

.view-on {
  background: #d2d2d2;
}

.z-minus {
  margin-left: 7px;
  width: 7px;
  height: 1px;
  background: #666;
}

.slider {
  margin-left: 5px;
  width: 93px;
  height: 1px;
  background: #888;
  display: flex;
  justify-content: center;
  align-items: center;
}

.slider i {
  flex: none;
  width: 5px;
  height: 11px;
  background: #777;
}

.z-plus {
  margin-left: 4px;
  font-size: 13px;
  color: #666;
}

.zoom {
  margin-left: 12px;
  font-size: 12.5px;
}
```
